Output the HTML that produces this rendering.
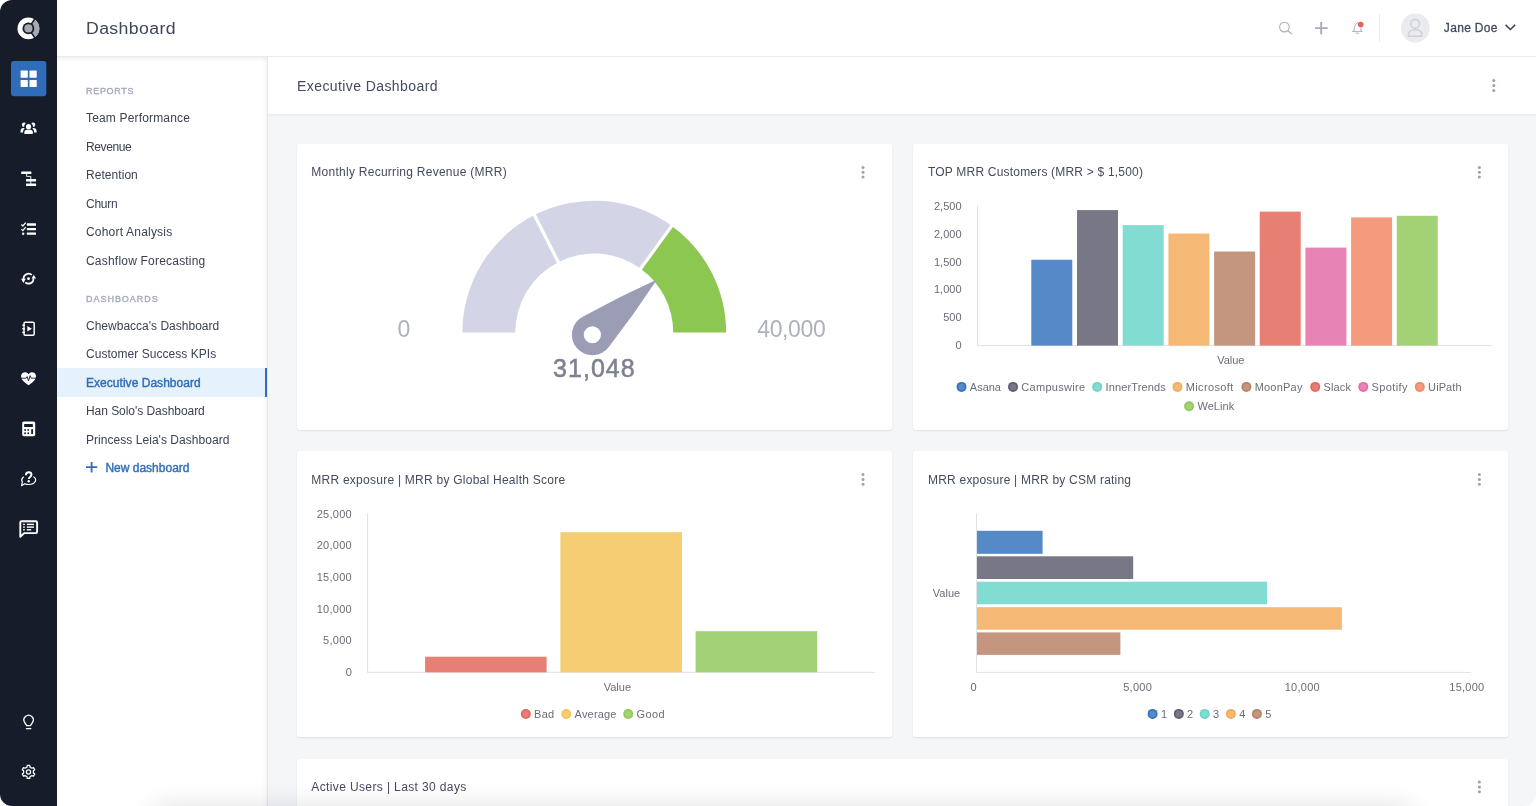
<!DOCTYPE html><html lang="en"><head><meta charset="utf-8"><title>Dashboard</title><style>
*{box-sizing:border-box}
html,body{margin:0;padding:0}
body{width:1536px;height:806px;overflow:hidden;background:#fff;font-family:"Liberation Sans", sans-serif;position:relative}
.t{position:absolute;white-space:nowrap;font-family:"Liberation Sans", sans-serif}
.abs{position:absolute}
#app{position:absolute;left:0;top:0;width:1536px;height:806px;overflow:hidden;border-radius:12px;background:#fff;will-change:transform}
#rail{position:absolute;left:0;top:0;width:57px;height:806px;background:#161c2a}
#topbar{position:absolute;left:57px;top:0;width:1479px;height:57px;background:#fff;border-bottom:1px solid #e9ebef;z-index:5}
#nav{position:absolute;left:57px;top:57px;width:211px;height:749px;background:#fff;border-right:1px solid #e3e5e9;z-index:3}
#subhead{position:absolute;left:268px;top:57px;width:1268px;height:57px;background:#fff;box-shadow:0 1px 3px rgba(30,40,60,.08);z-index:2}
#main{position:absolute;left:268px;top:114px;width:1268px;height:692px;background:#f5f6f8}
.card{position:absolute;background:#fff;border-radius:3px;box-shadow:0 1px 2px rgba(30,40,60,.10)}
#glow{position:absolute;left:150px;top:809px;width:1265px;height:40px;border-radius:20px;z-index:9;pointer-events:none;box-shadow:0 0 26px 2px rgba(25,30,45,.15)}
#nst{position:absolute;left:0;top:0;width:210px;height:6px;background:linear-gradient(to bottom, rgba(40,50,70,.07), rgba(40,50,70,.025) 50%, rgba(40,50,70,0))}
#nsr{position:absolute;left:204px;top:0;width:6px;height:749px;background:linear-gradient(to left, rgba(40,50,70,.04), rgba(40,50,70,.012) 55%, rgba(40,50,70,0))}
svg{position:absolute;left:0;top:0;overflow:visible}
</style></head><body><div id="app"><div id="rail"><svg width="57" height="806" viewBox="0 0 57 806"><circle cx="28.4" cy="28.4" r="10.9" fill="#fff"/><path d="M28.4,28.4 L34.50,19.36 A10.9,10.9 0 0 1 34.50,37.44 Z" fill="#a7a9b1"/><line x1="28.4" y1="28.4" x2="35.23" y2="18.28" stroke="#161c2a" stroke-width="1.5"/><line x1="28.4" y1="28.4" x2="35.23" y2="38.52" stroke="#161c2a" stroke-width="1.5"/><circle cx="28.4" cy="28.4" r="5.9" fill="#161c2a"/><circle cx="28.4" cy="28.4" r="4.1" fill="#a7a9b1"/><rect x="11" y="61" width="35.3" height="35.3" rx="3" fill="#2f6dbb"/><rect x="20.6" y="70.6" width="7.2" height="7.1" rx="0.6" fill="#fff"/><rect x="20.6" y="79.9" width="7.2" height="7.1" rx="0.6" fill="#fff"/><rect x="29.5" y="70.6" width="7.2" height="7.1" rx="0.6" fill="#fff"/><rect x="29.5" y="79.9" width="7.2" height="7.1" rx="0.6" fill="#fff"/><g fill="#fff"><circle cx="24.2" cy="124.75" r="2.35"/><circle cx="32.9" cy="124.75" r="2.35"/><path d="M20.55,132.5 v-1.5 a3.0,3.0 0 0 1 3.0,-3.0 h2.0 v4.5 z"/><path d="M36.55,132.5 v-1.5 a3.0,3.0 0 0 0 -3.0,-3.0 h-2.0 v4.5 z"/></g><circle cx="28.55" cy="126.7" r="4.45" fill="#161c2a"/><path d="M23.0,135 v-2.9 a3.9,3.9 0 0 1 3.9,-3.9 h3.3 a3.9,3.9 0 0 1 3.9,3.9 v2.9 z" fill="#161c2a"/><circle cx="28.55" cy="126.7" r="2.6" fill="#fff"/><path d="M24.4,134.1 v-1.9 a2.5,2.5 0 0 1 2.5,-2.5 h3.4 a2.5,2.5 0 0 1 2.5,2.5 v1.9 z" fill="#fff"/><g fill="#fff"><rect x="21.2" y="171.6" width="10.2" height="2.5" rx="0.5"/><rect x="26.0" y="179.0" width="10.1" height="2.5" rx="0.5"/><rect x="26.0" y="183.4" width="10.1" height="2.5" rx="0.5"/></g><path d="M26.6,174 V176.4 H30.8 V184" fill="none" stroke="#fff" stroke-width="0.9"/><rect x="26.8" y="223.35" width="9.2" height="2.3" rx="0.4" fill="#fff"/><path d="M21.4,224.5 l1.5,1.5 l2.8,-3.4" fill="none" stroke="#fff" stroke-width="1.3"/><rect x="26.8" y="227.95" width="9.2" height="2.3" rx="0.4" fill="#fff"/><path d="M21.4,229.1 l1.5,1.5 l2.8,-3.4" fill="none" stroke="#fff" stroke-width="1.3"/><rect x="26.8" y="232.54999999999998" width="9.2" height="2.3" rx="0.4" fill="#fff"/><circle cx="23.2" cy="233.7" r="1.2" fill="#fff"/><g fill="none" stroke="#fff" stroke-width="1.7"><path d="M31.84,274.99 A4.95,4.95 0 0 0 23.58,279.07"/><path d="M25.22,282.35 A4.95,4.95 0 0 0 33.48,278.27"/></g><path d="M21.1,278.8 H25.8 L23.4,283.0 Z" fill="#fff"/><path d="M31.6,278.5 H36.0 L33.75,274.7 Z" fill="#fff"/><circle cx="28.53" cy="278.67" r="1.4" fill="#fff"/><rect x="24.0" y="322.2" width="10.2" height="13.1" rx="1.2" fill="none" stroke="#fff" stroke-width="1.45"/><rect x="22.1" y="324.4" width="2.9" height="1.6" rx="0.8" fill="#fff"/><rect x="22.1" y="328.0" width="2.9" height="1.6" rx="0.8" fill="#fff"/><rect x="22.1" y="331.59999999999997" width="2.9" height="1.6" rx="0.8" fill="#fff"/><path d="M27.3,326.1 L31.9,328.85 L27.3,331.6 Z" fill="#fff"/><path d="M28.55,385.3 C26.6,383.7 22.9,381.0 21.8,378.9 C20.6,376.7 21.0,374.2 22.6,373.0 C24.4,371.7 26.9,372.0 28.55,374.2 C30.2,372.0 32.7,371.7 34.5,373.0 C36.1,374.2 36.5,376.7 35.3,378.9 C34.2,381.0 30.5,383.7 28.55,385.3 Z" fill="#fff"/><path d="M21.0,378.2 H26.2 L27.2,376.6 L28.5,381.0 L30.1,375.6 L31.2,378.2 H36.2" fill="none" stroke="#161c2a" stroke-width="0.9" stroke-linejoin="round"/><rect x="22.2" y="421.5" width="13.0" height="14.7" rx="1.6" fill="#fff"/><rect x="24.1" y="424.1" width="8.8" height="2.8" rx="0.4" fill="#161c2a"/><circle cx="25.1" cy="429.9" r="0.95" fill="#161c2a"/><circle cx="28.3" cy="429.9" r="0.95" fill="#161c2a"/><circle cx="25.1" cy="433.3" r="0.95" fill="#161c2a"/><circle cx="28.3" cy="433.3" r="0.95" fill="#161c2a"/><rect x="31.2" y="429.0" width="1.8" height="5.0" rx="0.6" fill="#161c2a"/><path d="M22.4,481.9 A6.95,4.5 0 1 1 24.71,483.69 L21.5,485.7 Z" fill="none" stroke="#fff" stroke-width="1.15" stroke-linejoin="round"/><rect x="23.9" y="470" width="9.4" height="7.6" fill="#161c2a"/><path d="M25.9,475.2 C25.9,473.2 27.1,472.3 28.7,472.3 C30.3,472.3 31.5,473.2 31.5,474.8 C31.5,476.9 28.7,476.9 28.7,479.0" fill="none" stroke="#fff" stroke-width="1.9"/><circle cx="28.7" cy="481.2" r="1.2" fill="#fff"/><path d="M21.6,521.2 H35.8 A1.3,1.3 0 0 1 37.1,522.5 V531.8 A1.3,1.3 0 0 1 35.8,533.1 H24.2 L20.3,536.8 V522.5 A1.3,1.3 0 0 1 21.6,521.2 Z" fill="none" stroke="#fff" stroke-width="1.9" stroke-linejoin="round"/><rect x="23.1" y="523.6999999999999" width="1.7" height="1.4" fill="#fff"/><rect x="26.8" y="523.6999999999999" width="7.2" height="1.4" fill="#fff"/><rect x="23.1" y="526.4" width="1.7" height="1.4" fill="#fff"/><rect x="26.8" y="526.4" width="7.2" height="1.4" fill="#fff"/><rect x="23.1" y="529.0999999999999" width="1.7" height="1.4" fill="#fff"/><rect x="26.8" y="529.0999999999999" width="4.4" height="1.4" fill="#fff"/><path d="M26.7,725.6 L24.79,722.57 A4.65,4.65 0 1 1 32.41,722.57 L30.5,725.6 Z" fill="none" stroke="#fff" stroke-width="1.3" stroke-linejoin="round"/><line x1="26.4" y1="728.6" x2="30.9" y2="728.6" stroke="#fff" stroke-width="1.3" stroke-linecap="round"/><path d="M29.98,776.68 L29.75,778.38 L27.25,778.38 L27.02,776.68 L25.10,775.57 L23.51,776.22 L22.26,774.06 L23.62,773.01 L23.62,770.79 L22.26,769.74 L23.51,767.58 L25.10,768.23 L27.02,767.12 L27.25,765.42 L29.75,765.42 L29.98,767.12 L31.90,768.23 L33.49,767.58 L34.74,769.74 L33.38,770.79 L33.38,773.01 L34.74,774.06 L33.49,776.22 L31.90,775.57 Z" fill="none" stroke="#fff" stroke-width="1.25" stroke-linejoin="round"/><circle cx="28.5" cy="771.9" r="2.1" fill="none" stroke="#fff" stroke-width="1.25"/></svg></div><div id="topbar"><svg width="1536" height="57" viewBox="0 0 1536 57" style="left:-57px"><circle cx="1284.4" cy="27.1" r="4.8" fill="none" stroke="#adb0ba" stroke-width="1.1"/><line x1="1287.9" y1="30.7" x2="1291.4" y2="33.8" stroke="#adb0ba" stroke-width="1.2" stroke-linecap="round"/><path d="M1315,28.1 H1327.7 M1321.2,22.1 V34.2" stroke="#a7abba" stroke-width="1.9" fill="none"/><path d="M1352.2,31.4 H1362.2 M1353.6,31.2 C1354.6,29.6 1354.2,27.6 1354.9,25.9 C1355.5,24.3 1356.4,23.3 1357.8,22.6 M1361.0,28.6 V31.2 M1356.0,33.2 H1358.6" fill="none" stroke="#adb1be" stroke-width="1.0" stroke-linecap="round"/><circle cx="1360.7" cy="24.6" r="2.8" fill="#e2635a"/><rect x="1379" y="14" width="1" height="28" fill="#eaecef"/><circle cx="1415.4" cy="28" r="14.4" fill="#e9ebee"/><circle cx="1415.1" cy="23.9" r="4.4" fill="none" stroke="#cdcfd5" stroke-width="1.4"/><path d="M1408.4,36.2 V35.0 C1408.4,31.6 1411.2,29.6 1415.1,29.6 C1419.0,29.6 1421.8,31.6 1421.8,35.0 V36.2 Z" fill="none" stroke="#cdcfd5" stroke-width="1.4" stroke-linejoin="round"/><path d="M1505.6,24.9 L1510.4,29.5 L1515.2,24.9" fill="none" stroke="#3c4254" stroke-width="1.5"/></svg><div class="abs" style="left:-57px;top:0;width:1536px;height:57px"><span class="t" style="font-size:16px;line-height:21px;top:18px;color:#40465a;letter-spacing:0.350px;left:86.00px;transform:scaleX(1.105);transform-origin:0 50%;">Dashboard</span><span class="t" style="font-size:12px;line-height:18px;top:19px;color:#434a5d;letter-spacing:0.340px;-webkit-text-stroke:0.3px #434a5d;left:1443.80px;">Jane Doe</span></div></div><div id="nav"><div id="nst"></div><div id="nsr"></div><div class="abs" style="left:-57px;top:-57px;width:1536px;height:806px"><span class="t" style="font-size:9px;line-height:14px;top:84px;color:#a4aabb;letter-spacing:0.700px;-webkit-text-stroke:0.35px #a4aabb;left:86.00px;">REPORTS</span><span class="t" style="font-size:9px;line-height:14px;top:292px;color:#a4aabb;letter-spacing:0.970px;-webkit-text-stroke:0.35px #a4aabb;left:86.00px;">DASHBOARDS</span><div class="abs" style="left:57px;top:368.2px;width:210.2px;height:28.4px;background:#e6f2fb"></div><div class="abs" style="left:265px;top:368.2px;width:2.2px;height:28.4px;background:#2f6dbb"></div><span class="t" style="font-size:12px;line-height:18px;top:109px;color:#3c4254;letter-spacing:0.168px;left:86.00px;">Team Performance</span><span class="t" style="font-size:12px;line-height:18px;top:138px;color:#3c4254;letter-spacing:-0.391px;left:86.00px;">Revenue</span><span class="t" style="font-size:12px;line-height:18px;top:166px;color:#3c4254;letter-spacing:0.053px;left:86.00px;">Retention</span><span class="t" style="font-size:12px;line-height:18px;top:195px;color:#3c4254;letter-spacing:-0.272px;left:86.00px;">Churn</span><span class="t" style="font-size:12px;line-height:18px;top:223px;color:#3c4254;letter-spacing:0.200px;left:86.00px;">Cohort Analysis</span><span class="t" style="font-size:12px;line-height:18px;top:252px;color:#3c4254;letter-spacing:0.206px;left:86.00px;">Cashflow Forecasting</span><span class="t" style="font-size:12px;line-height:18px;top:317px;color:#3c4254;letter-spacing:0.008px;left:86.00px;">Chewbacca's Dashboard</span><span class="t" style="font-size:12px;line-height:18px;top:345px;color:#3c4254;letter-spacing:0.041px;left:86.00px;">Customer Success KPIs</span><span class="t" style="font-size:12px;line-height:18px;top:374px;color:#2f6dbb;letter-spacing:0.035px;-webkit-text-stroke:0.4px #2f6dbb;left:86.00px;">Executive Dashboard</span><span class="t" style="font-size:12px;line-height:18px;top:402px;color:#3c4254;letter-spacing:-0.048px;left:86.00px;">Han Solo's Dashboard</span><span class="t" style="font-size:12px;line-height:18px;top:431px;color:#3c4254;letter-spacing:0.043px;left:86.00px;">Princess Leia's Dashboard</span><svg width="1536" height="806"><path d="M86,467.2 H97.2 M91.6,462 V472.4" stroke="#2f6dbb" stroke-width="1.8" fill="none"/></svg><span class="t" style="font-size:12px;line-height:18px;top:459px;color:#2f6dbb;letter-spacing:0.003px;-webkit-text-stroke:0.4px #2f6dbb;left:105.40px;">New dashboard</span></div></div><div id="subhead"><div class="abs" style="left:-268px;top:-57px;width:1536px;height:806px"><span class="t" style="font-size:14px;line-height:20px;top:76px;color:#454b5e;letter-spacing:0.407px;left:297.10px;">Executive Dashboard</span><svg width="1536" height="806"><circle cx="1493.8" cy="80.50" r="1.55" fill="#9da1af"/><circle cx="1493.8" cy="85.50" r="1.55" fill="#9da1af"/><circle cx="1493.8" cy="90.50" r="1.55" fill="#9da1af"/></svg></div></div><div id="main"><div class="abs" style="left:-268px;top:-114px;width:1536px;height:806px"><div class="card" style="left:297px;top:144px;width:595px;height:286px"></div><div class="card" style="left:913px;top:144px;width:595px;height:286px"></div><div class="card" style="left:297px;top:451px;width:595px;height:286px"></div><div class="card" style="left:913px;top:451px;width:595px;height:286px"></div><div class="card" style="left:297px;top:758.5px;width:1211px;height:80px"></div><span class="t" style="font-size:12px;line-height:18px;top:163px;color:#454b5e;letter-spacing:0.266px;left:311.30px;">Monthly Recurring Revenue (MRR)</span><span class="t" style="font-size:12px;line-height:18px;top:163px;color:#454b5e;letter-spacing:0.196px;left:928.00px;">TOP MRR Customers (MRR &gt; $ 1,500)</span><span class="t" style="font-size:12px;line-height:18px;top:471px;color:#454b5e;letter-spacing:0.248px;left:311.30px;">MRR exposure | MRR by Global Health Score</span><span class="t" style="font-size:12px;line-height:18px;top:471px;color:#454b5e;letter-spacing:0.210px;left:928.00px;">MRR exposure | MRR by CSM rating</span><span class="t" style="font-size:12px;line-height:18px;top:778px;color:#454b5e;letter-spacing:0.377px;left:311.30px;">Active Users | Last 30 days</span><svg width="1536" height="806" viewBox="0 0 1536 806" font-family='"Liberation Sans", sans-serif'><circle cx="863" cy="167.50" r="1.5" fill="#9da1af"/><circle cx="863" cy="172.30" r="1.5" fill="#9da1af"/><circle cx="863" cy="177.10" r="1.5" fill="#9da1af"/><circle cx="1479.4" cy="167.50" r="1.5" fill="#9da1af"/><circle cx="1479.4" cy="172.30" r="1.5" fill="#9da1af"/><circle cx="1479.4" cy="177.10" r="1.5" fill="#9da1af"/><circle cx="863" cy="474.60" r="1.5" fill="#9da1af"/><circle cx="863" cy="479.40" r="1.5" fill="#9da1af"/><circle cx="863" cy="484.20" r="1.5" fill="#9da1af"/><circle cx="1479.4" cy="474.60" r="1.5" fill="#9da1af"/><circle cx="1479.4" cy="479.40" r="1.5" fill="#9da1af"/><circle cx="1479.4" cy="484.20" r="1.5" fill="#9da1af"/><circle cx="1479.4" cy="782.10" r="1.5" fill="#9da1af"/><circle cx="1479.4" cy="786.90" r="1.5" fill="#9da1af"/><circle cx="1479.4" cy="791.70" r="1.5" fill="#9da1af"/><path d="M462.35,332.60 A131.9,131.9 0 0 1 534.37,215.08 L558.38,262.21 A79.0,79.0 0 0 0 515.25,332.60 Z" fill="#d3d5e6"/><path d="M534.37,215.08 A131.9,131.9 0 0 1 671.78,225.89 L640.69,268.69 A79.0,79.0 0 0 0 558.38,262.21 Z" fill="#d3d5e6"/><path d="M671.78,225.89 A131.9,131.9 0 0 1 726.15,332.60 L673.25,332.60 A79.0,79.0 0 0 0 640.69,268.69 Z" fill="#8cc751"/><line x1="559.29" y1="263.99" x2="533.46" y2="213.29" stroke="#fff" stroke-width="3.2"/><line x1="639.51" y1="270.31" x2="672.95" y2="224.27" stroke="#fff" stroke-width="3.2"/><path d="M657.00,279.50 Q634.06,314.30 609.03,346.66 A20.5,20.5 0 1 1 583.18,316.41 Q619.05,296.74 657.00,279.50 Z" fill="#9b9db5"/><circle cx="592.35" cy="334.75" r="8.6" fill="#fff"/><text x="404.00" y="336.80" font-size="23" fill="#aeb1bb" text-anchor="middle" >0</text><text x="757.20" y="336.80" font-size="23" fill="#aeb1bb" letter-spacing="-0.350" >40,000</text><text x="553.00" y="377.20" font-size="25" fill="#7d8190" letter-spacing="1.050" stroke="#7d8190" stroke-width="0.55">31,048</text><rect x="977.00" y="206.00" width="1.00" height="140.00" fill="#e1e2e5"/><rect x="977.00" y="345.10" width="514.60" height="1.00" fill="#e1e2e5"/><text x="961.50" y="210.15" font-size="11" fill="#6b6d75" text-anchor="end" >2,500</text><text x="961.50" y="237.92" font-size="11" fill="#6b6d75" text-anchor="end" >2,000</text><text x="961.50" y="265.69" font-size="11" fill="#6b6d75" text-anchor="end" >1,500</text><text x="961.50" y="293.46" font-size="11" fill="#6b6d75" text-anchor="end" >1,000</text><text x="961.50" y="321.23" font-size="11" fill="#6b6d75" text-anchor="end" >500</text><text x="961.50" y="349.00" font-size="11" fill="#6b6d75" text-anchor="end" >0</text><rect x="1031.30" y="259.75" width="41.00" height="85.85" fill="#5689c7"/><rect x="1077.00" y="210.10" width="41.00" height="135.50" fill="#777786"/><rect x="1122.70" y="225.10" width="41.00" height="120.50" fill="#83dcd2"/><rect x="1168.40" y="233.50" width="41.00" height="112.10" fill="#f5b975"/><rect x="1214.10" y="251.50" width="41.00" height="94.10" fill="#c5967f"/><rect x="1259.75" y="211.60" width="41.00" height="134.00" fill="#e77f75"/><rect x="1305.40" y="247.60" width="41.00" height="98.00" fill="#e883b5"/><rect x="1351.10" y="217.40" width="41.00" height="128.20" fill="#f39b7c"/><rect x="1396.75" y="215.80" width="41.00" height="129.80" fill="#a2d275"/><text x="1230.80" y="364.40" font-size="11" fill="#6b6d75" text-anchor="middle" >Value</text><circle cx="961.50" cy="386.90" r="5" fill="#3874bd"/><circle cx="961.50" cy="386.90" r="3.2" fill="#5689c7"/><text x="969.80" y="390.85" font-size="11" fill="#6b6d78" letter-spacing="-0.001" >Asana</text><circle cx="1013.00" cy="386.90" r="5" fill="#5f5f71"/><circle cx="1013.00" cy="386.90" r="3.2" fill="#777786"/><text x="1021.30" y="390.85" font-size="11" fill="#6b6d78" letter-spacing="0.290" >Campuswire</text><circle cx="1097.20" cy="386.90" r="5" fill="#6dd6ca"/><circle cx="1097.20" cy="386.90" r="3.2" fill="#83dcd2"/><text x="1105.50" y="390.85" font-size="11" fill="#6b6d78" letter-spacing="0.129" >InnerTrends</text><circle cx="1177.50" cy="386.90" r="5" fill="#f3ad5d"/><circle cx="1177.50" cy="386.90" r="3.2" fill="#f5b975"/><text x="1185.80" y="390.85" font-size="11" fill="#6b6d78" letter-spacing="0.359" >Microsoft</text><circle cx="1246.40" cy="386.90" r="5" fill="#bb8368"/><circle cx="1246.40" cy="386.90" r="3.2" fill="#c5967f"/><text x="1254.70" y="390.85" font-size="11" fill="#6b6d78" letter-spacing="0.203" >MoonPay</text><circle cx="1315.20" cy="386.90" r="5" fill="#e3685d"/><circle cx="1315.20" cy="386.90" r="3.2" fill="#e77f75"/><text x="1323.50" y="390.85" font-size="11" fill="#6b6d78" letter-spacing="0.123" >Slack</text><circle cx="1363.30" cy="386.90" r="5" fill="#e46da8"/><circle cx="1363.30" cy="386.90" r="3.2" fill="#e883b5"/><text x="1371.60" y="390.85" font-size="11" fill="#6b6d78" letter-spacing="0.377" >Spotify</text><circle cx="1419.80" cy="386.90" r="5" fill="#f18965"/><circle cx="1419.80" cy="386.90" r="3.2" fill="#f39b7c"/><text x="1428.10" y="390.85" font-size="11" fill="#6b6d78" letter-spacing="0.094" >UiPath</text><circle cx="1189.10" cy="406.25" r="5" fill="#92ca5d"/><circle cx="1189.10" cy="406.25" r="3.2" fill="#a2d275"/><text x="1197.40" y="410.20" font-size="11" fill="#6b6d78" letter-spacing="0.083" >WeLink</text><rect x="367.10" y="513.30" width="1.00" height="159.50" fill="#e1e2e5"/><rect x="367.10" y="671.80" width="507.70" height="1.00" fill="#e1e2e5"/><text x="351.90" y="517.50" font-size="11" fill="#6b6d75" text-anchor="end" letter-spacing="0.250" >25,000</text><text x="351.90" y="549.20" font-size="11" fill="#6b6d75" text-anchor="end" letter-spacing="0.250" >20,000</text><text x="351.90" y="580.90" font-size="11" fill="#6b6d75" text-anchor="end" letter-spacing="0.250" >15,000</text><text x="351.90" y="612.60" font-size="11" fill="#6b6d75" text-anchor="end" letter-spacing="0.250" >10,000</text><text x="351.90" y="644.30" font-size="11" fill="#6b6d75" text-anchor="end" letter-spacing="0.250" >5,000</text><text x="351.90" y="676.00" font-size="11" fill="#6b6d75" text-anchor="end" >0</text><rect x="425.10" y="656.70" width="121.50" height="15.60" fill="#e77f75"/><rect x="560.40" y="532.20" width="121.60" height="140.10" fill="#f5cd72"/><rect x="695.60" y="631.20" width="121.60" height="41.10" fill="#a2d275"/><text x="617.40" y="691.10" font-size="11" fill="#6b6d75" text-anchor="middle" >Value</text><circle cx="525.80" cy="714.00" r="5" fill="#e3685d"/><circle cx="525.80" cy="714.00" r="3.2" fill="#e77f75"/><text x="534.10" y="717.95" font-size="11" fill="#6b6d78" letter-spacing="0.261" >Bad</text><circle cx="566.30" cy="714.00" r="5" fill="#f3c459"/><circle cx="566.30" cy="714.00" r="3.2" fill="#f5cd72"/><text x="574.60" y="717.95" font-size="11" fill="#6b6d78" letter-spacing="0.186" >Average</text><circle cx="628.20" cy="714.00" r="5" fill="#92ca5d"/><circle cx="628.20" cy="714.00" r="3.2" fill="#a2d275"/><text x="636.50" y="717.95" font-size="11" fill="#6b6d78" letter-spacing="0.393" >Good</text><rect x="976.00" y="513.40" width="1.00" height="159.50" fill="#e1e2e5"/><rect x="976.00" y="671.90" width="494.90" height="1.00" fill="#e1e2e5"/><rect x="977.00" y="530.80" width="65.60" height="23.00" fill="#5689c7"/><rect x="977.00" y="556.30" width="156.20" height="22.70" fill="#777786"/><rect x="977.00" y="581.70" width="290.00" height="22.60" fill="#83dcd2"/><rect x="977.00" y="607.20" width="364.90" height="22.50" fill="#f5b975"/><rect x="977.00" y="632.40" width="143.40" height="22.50" fill="#c5967f"/><text x="932.80" y="596.70" font-size="11" fill="#6b6d75" >Value</text><text x="973.50" y="691.20" font-size="11" fill="#6b6d75" text-anchor="middle" >0</text><text x="1137.62" y="691.20" font-size="11" fill="#6b6d75" text-anchor="middle" letter-spacing="0.250" >5,000</text><text x="1302.32" y="691.20" font-size="11" fill="#6b6d75" text-anchor="middle" letter-spacing="0.250" >10,000</text><text x="1466.92" y="691.20" font-size="11" fill="#6b6d75" text-anchor="middle" letter-spacing="0.250" >15,000</text><circle cx="1152.60" cy="713.90" r="5" fill="#3874bd"/><circle cx="1152.60" cy="713.90" r="3.2" fill="#5689c7"/><text x="1160.90" y="717.85" font-size="11" fill="#6b6d78" >1</text><circle cx="1178.80" cy="713.90" r="5" fill="#5f5f71"/><circle cx="1178.80" cy="713.90" r="3.2" fill="#777786"/><text x="1187.10" y="717.85" font-size="11" fill="#6b6d78" >2</text><circle cx="1204.70" cy="713.90" r="5" fill="#6dd6ca"/><circle cx="1204.70" cy="713.90" r="3.2" fill="#83dcd2"/><text x="1213.00" y="717.85" font-size="11" fill="#6b6d78" >3</text><circle cx="1230.90" cy="713.90" r="5" fill="#f3ad5d"/><circle cx="1230.90" cy="713.90" r="3.2" fill="#f5b975"/><text x="1239.20" y="717.85" font-size="11" fill="#6b6d78" >4</text><circle cx="1256.90" cy="713.90" r="5" fill="#bb8368"/><circle cx="1256.90" cy="713.90" r="3.2" fill="#c5967f"/><text x="1265.20" y="717.85" font-size="11" fill="#6b6d78" >5</text></svg></div></div><div id="glow"></div></div></body></html>
